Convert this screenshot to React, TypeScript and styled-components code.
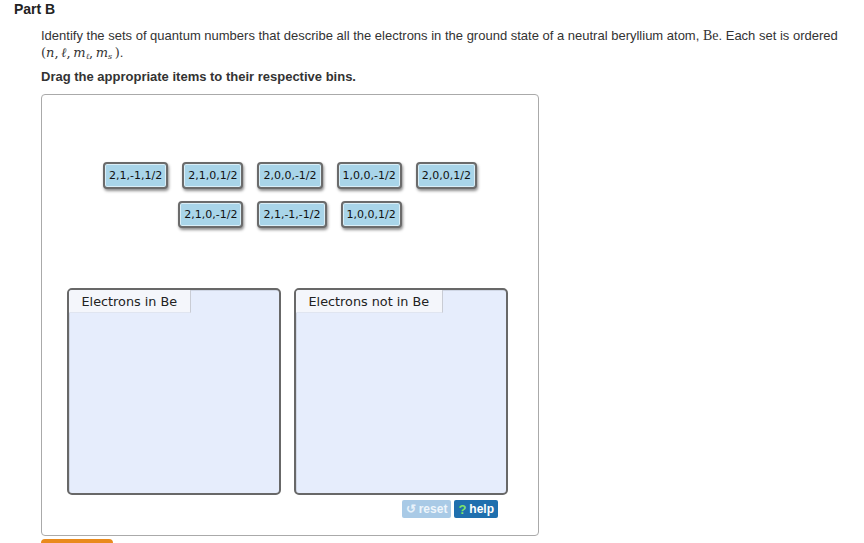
import React from 'react'
import styled, {createGlobalStyle} from 'styled-components'

const GlobalStyle = createGlobalStyle`
  body {
    margin: 0;
    background: #fff;
    font-family: "Liberation Sans", Arial, sans-serif;
    color: #333;
  }
`;

const row1 = ['2,1,-1,1/2', '2,1,0,1/2', '2,0,0,-1/2', '1,0,0,-1/2', '2,0,0,1/2'];
const row2 = ['2,1,0,-1/2', '2,1,-1,-1/2', '1,0,0,1/2'];

const App: React.FC = () => {
  return (
    <>
      <GlobalStyle />
      <Page>
        <PartTitle>Part B</PartTitle>
        <Body>
          <Question>
            Identify the sets of quantum numbers that describe all the electrons in the ground state of a neutral beryllium atom, <Roman>Be</Roman>. Each set is ordered
            <br />
            <Math>
              (<i>n</i>,&thinsp;<i>ℓ</i>,&thinsp;<i>m</i><sub><i>ℓ</i></sub>,&thinsp;<i>m</i><sub><i>s</i></sub>&thinsp;)
            </Math>.
          </Question>
          <Instruction>Drag the appropriate items to their respective bins.</Instruction>
          <Board>
            <Pool>
              <TokenRow>
                {row1.map(t => <Token key={t}>{t}</Token>)}
              </TokenRow>
              <TokenRow>
                {row2.map(t => <Token key={t}>{t}</Token>)}
              </TokenRow>
            </Pool>
            <Bins>
              <Bin>
                <BinLabel>Electrons in Be</BinLabel>
              </Bin>
              <Bin>
                <BinLabel>Electrons not in Be</BinLabel>
              </Bin>
            </Bins>
            <Controls>
              <ResetButton><span>↺</span> reset</ResetButton>
              <HelpButton><span>?</span> help</HelpButton>
            </Controls>
          </Board>
          <Submit />
        </Body>
      </Page>
    </>
  );
}

export default App

const Page = styled.div`
  padding: 0 0 0 14px;
  width: 850px;
`;
const PartTitle = styled.h3`
  font-size: 14px;
  font-weight: bold;
  color: #222;
  margin: 0 0 9px;
  line-height: 18px;
`;
const Body = styled.div`
  padding-left: 27px;
`;
const Question = styled.p`
  font-size: 13px;
  line-height: 17px;
  margin: 0 0 4px;
  width: 823px;
`;
const Roman = styled.span`
  font-family: "Liberation Serif", "DejaVu Serif", serif;
  font-size: 14px;
`;
const Math = styled.span`
  font-family: "DejaVu Serif", "Liberation Serif", serif;
  font-size: 13px;
  i { font-style: italic; }
  sub { font-size: 8px; vertical-align: -2px; }
`;
const Instruction = styled.p`
  font-size: 13px;
  font-weight: bold;
  margin: 0 0 9px;
  line-height: 16px;
`;
const Board = styled.div`
  width: 496px;
  height: 440px;
  border: 1px solid #aaa;
  border-radius: 4px;
  display: flex;
  flex-direction: column;
  align-items: center;
`;
const Pool = styled.div`
  padding-top: 67px;
  display: flex;
  flex-direction: column;
  align-items: center;
  gap: 12px;
  height: 126px;
`;
const TokenRow = styled.div`
  display: flex;
  gap: 14px;
`;
const Token = styled.div`
  height: 23px;
  padding: 0 4px;
  display: flex;
  align-items: center;
  background: #a9d5e9;
  border: 2px solid #6b6b6b;
  border-radius: 4px;
  box-shadow: inset 0 0 0 1px #d9eef7, 1px 2px 3px rgba(0, 0, 0, 0.45);
  font-family: "DejaVu Sans", Verdana, sans-serif;
  font-size: 11px;
  color: #111;
`;
const Bins = styled.div`
  display: flex;
  gap: 13px;
  margin-left: -6px;
`;
const Bin = styled.div`
  width: 210px;
  height: 203px;
  border: 2px solid #686868;
  border-radius: 5px;
  background: #e6edfc;
  box-shadow: inset 1px 1px 0 #cfd6e4;
  overflow: hidden;
`;
const BinLabel = styled.div`
  display: inline-block;
  height: 22px;
  line-height: 24px;
  padding: 0 13px;
  background: #f4f6fb;
  border-right: 1px solid #c9ccd4;
  border-bottom: 1px solid #e0e5f0;
  font-family: "DejaVu Sans", Verdana, sans-serif;
  font-size: 12.8px;
  color: #222;
`;
const Controls = styled.div`
  align-self: flex-end;
  margin: 5px 40px 0 0;
  display: flex;
  gap: 3px;
`;
const SmallButton = styled.div`
  height: 18px;
  padding: 0 4px;
  border-radius: 2px;
  display: flex;
  align-items: center;
  gap: 3px;
  font-family: "Liberation Sans", Arial, sans-serif;
  font-weight: bold;
  font-size: 12px;
  color: #fff;
`;
const ResetButton = styled(SmallButton)`
  background: #a9cae6;
  color: #eef5fb;
  span { font-size: 12px; color: #e8f2fb; }
`;
const HelpButton = styled(SmallButton)`
  background: #1f6fae;
  span { color: #7ee36a; font-size: 13px; }
`;
const Submit = styled.div`
  margin-top: 3px;
  width: 72px;
  height: 10px;
  background: #e98a1d;
  border-radius: 4px 4px 0 0;
`;
